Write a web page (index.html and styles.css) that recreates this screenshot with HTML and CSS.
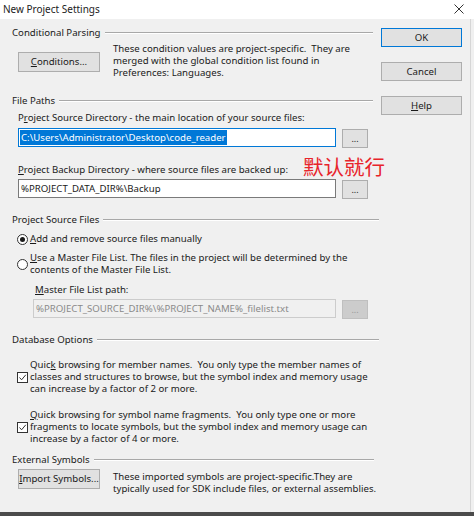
FILE: index.html
```html
<!DOCTYPE html>
<html>
<head>
<meta charset="utf-8">
<link rel="stylesheet" href="styles.css">
</head>
<body>
<div class="dialog">
  <div class="titlebar">
    <span class="title">New Project Settings</span>
    <svg class="close" width="10" height="10" viewBox="0 0 10 10"><path d="M0.5 0.5 L9.5 9.5 M9.5 0.5 L0.5 9.5" stroke="#333" stroke-width="1" fill="none"/></svg>
  </div>
  <div class="body">
    <div class="main">
      <div class="group-head g1"><span>Conditional Parsing</span><i class="rule"></i></div>
      <div class="row cond-row">
        <button class="btn btn-side"><u>C</u>onditions...</button>
        <p class="note">These condition values are project-specific.&nbsp; They are<br>merged with the global condition list found in<br>Preferences: Languages.</p>
      </div>

      <div class="group-head g2"><span>File Paths</span><i class="rule"></i></div>
      <div class="label l1">P<u>r</u>oject Source Directory - the main location of your source files:</div>
      <div class="row field-row">
        <div class="input focus"><span class="sel">C:\Users\Administrator\Desktop\code_reader</span></div>
        <button class="btn dots">...</button>
      </div>
      <div class="label l2"><u>P</u>roject Backup Directory - where source files are backed up:<span class="note-cn">默认就行</span></div>
      <div class="row field-row f2">
        <div class="input">%PROJECT_DATA_DIR%\Backup</div>
        <button class="btn dots">...</button>
      </div>

      <div class="group-head g3"><span>Project Source Files</span><i class="rule"></i></div>
      <div class="radio-row r1"><span class="radio on"></span><span><u>A</u>dd and remove source files manually</span></div>
      <div class="radio-row r2"><span class="radio"></span><span><u>U</u>se a Master File List. The files in the project will be determined by the<br>contents of the Master File List.</span></div>
      <div class="label l3"><u>M</u>aster File List path:</div>
      <div class="row field-row f3">
        <div class="input disabled">%PROJECT_SOURCE_DIR%\%PROJECT_NAME%_filelist.txt</div>
        <button class="btn dots off">...</button>
      </div>

      <div class="group-head g4"><span>Database Options</span><i class="rule"></i></div>
      <div class="check-row c1"><span class="check"><svg width="9" height="9" viewBox="0 0 9 9"><path d="M1.5 4.5 L3.6 6.8 L7.8 1.8" stroke="#333" stroke-width="1" fill="none"/></svg></span><span>Quic<u>k</u> browsing for member names.&nbsp; You only type the member names of<br>classes and structures to browse, but the symbol index and memory usage<br>can increase by a factor of 2 or more.</span></div>
      <div class="check-row c2"><span class="check"><svg width="9" height="9" viewBox="0 0 9 9"><path d="M1.5 4.5 L3.6 6.8 L7.8 1.8" stroke="#333" stroke-width="1" fill="none"/></svg></span><span><u>Q</u>uick browsing for symbol name fragments.&nbsp; You only type one or more<br>fragments to locate symbols, but the symbol index and memory usage can<br>increase by a factor of 4 or more.</span></div>

      <div class="group-head g5"><span>External Symbols</span><i class="rule"></i></div>
      <div class="row imp-row">
        <button class="btn btn-side"><u>I</u>mport Symbols...</button>
        <p class="note">These imported symbols are project-specific.They are<br>typically used for SDK include files, or external assemblies.</p>
      </div>
    </div>
    <div class="side">
      <button class="btn big default">OK</button>
      <button class="btn big">Cancel</button>
      <button class="btn big"><u>H</u>elp</button>
    </div>
  </div>
  <div class="taskbar"></div>
</div>
</body>
</html>
```
FILE: styles.css
```css
* { box-sizing: border-box; }
html, body { margin: 0; padding: 0; }
body {
  width: 474px;
  height: 516px;
  overflow: hidden;
  font-family: "Noto Sans", "Open Sans", sans-serif;
  font-size: 9.65px;
  line-height: 12px;
  color: #1a1a1a;
  background: #f0f0f0;
}
u { text-decoration: underline; text-underline-offset: 1px; }
.dialog { display: flex; flex-direction: column; height: 516px; }
.titlebar {
  flex: none;
  height: 19px;
  background: #ffffff;
  display: flex;
  align-items: center;
  justify-content: space-between;
  padding: 0 10px 1px 3px;
}
.title { font-size: 10px; color: #222; }
.close { margin-top: -1px; }
.body {
  flex: 1;
  min-height: 0;
  overflow: hidden;
  display: flex;
  background: #f0f0f0;
  border-right: 1px solid #d6d6d6;
  margin-right: 3px;
}
.main { width: 381px; flex: none; padding-left: 12px; }
.side {
  display: flex;
  flex-direction: column;
  gap: 15px;
  padding-top: 9px;
}
.taskbar { flex: none; height: 4px; background: #4b4b4b; }

.group-head {
  display: flex;
  align-items: center;
  height: 12px;
}
.group-head span { white-space: nowrap; }
.rule {
  flex: 1;
  height: 2px;
  margin-left: 4px;
  border-top: 1px solid #a8a8a8;
  border-bottom: 1px solid #ffffff;
}
.g1 { margin-top: 8px; width: 361px; }
.g2 { margin-top: 16px; width: 361px; }
.g3 { margin-top: 15px; width: 367px; }
.g4 { margin-top: 15px; width: 367px; }
.g5 { margin-top: 9px; width: 362px; }

.row { display: flex; }
.note { margin: 0; white-space: nowrap; }
.btn {
  font: inherit;
  color: #1a1a1a;
  background: #e1e1e1;
  border: 1px solid #adadad;
  padding: 0;
  height: 20px;
  line-height: 18px;
  text-align: center;
  white-space: nowrap;
}
.btn-side { width: 82px; margin-left: 6px; margin-right: 13px; flex: none; }
.cond-row { margin-top: 4px; }
.cond-row .btn-side { margin-top: 9px; }
.imp-row { margin-top: 3px; }
.imp-row .note { margin-top: 2px; }

.label { margin-left: 6px; white-space: nowrap; }
.l1 { margin-top: 5px; }
.l2 { margin-top: 16px; position: relative; }
.l3 { margin-top: 8px; margin-left: 23px; }
.note-cn {
  position: absolute;
  left: 285px;
  top: -10px;
  font-family: "Noto Sans CJK SC", sans-serif;
  font-size: 20.5px;
  line-height: 24px;
  color: #e8242b;
  white-space: nowrap;
}

.field-row { margin-top: 4px; margin-left: 6px; align-items: flex-start; }
.f2 { margin-top: 3px; }
.f3 { margin-top: 3px; margin-left: 21px; }
.input {
  width: 318px;
  height: 19px;
  flex: none;
  background: #ffffff;
  border: 1px solid #7a7a7a;
  padding: 0 2px;
  line-height: 17px;
  white-space: nowrap;
  overflow: hidden;
}
.input.focus { border-color: #0078d7; padding-left: 1px; }
.sel { background: #0078d7; color: #ffffff; display: inline-block; line-height: 15px; margin-top: 1px; padding: 0 1px; }
.f3 .input { width: 303px; }
.input.disabled { background: #f0f0f0; border-color: #cccccc; color: #8a8a8a; }
.dots {
  width: 26px;
  height: 19px;
  flex: none;
  margin-left: 6px;
  margin-top: 1px;
  line-height: 14px;
  font-size: 9px;
}
.dots.off { background: #cccccc; border-color: #bfbfbf; color: #9a9a9a; }

.radio-row, .check-row { display: flex; align-items: center; margin-left: 5px; white-space: nowrap; }
.r1 { margin-top: 7px; }
.r2 { margin-top: 7px; }
.radio {
  width: 11px;
  height: 11px;
  border: 1px solid #333;
  border-radius: 50%;
  background: #fff;
  margin-right: 2px;
  flex: none;
  position: relative;
}
.radio.on::after {
  content: "";
  position: absolute;
  left: 2px; top: 2px;
  width: 5px; height: 5px;
  border-radius: 50%;
  background: #1a1a1a;
}
.check {
  width: 11px;
  height: 11px;
  border: 1px solid #333;
  background: #fff;
  margin-right: 2px;
  flex: none;
  display: flex;
  align-items: center;
  justify-content: center;
}
.c1 { margin-top: 13px; }
.c2 { margin-top: 14px; }

.big { width: 81px; height: 19px; line-height: 17px; }
.default { border-color: #0078d7; }
```
